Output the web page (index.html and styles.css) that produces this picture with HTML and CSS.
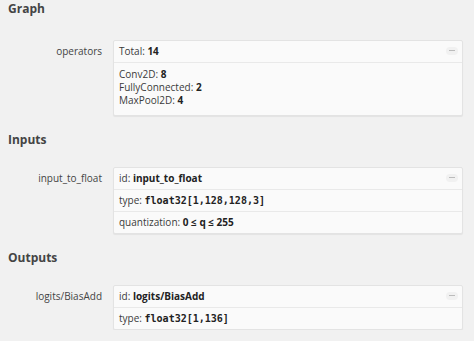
FILE: index.html
```html
<!DOCTYPE html>
<html>

<head>
    <title>Model Properties</title>
    <link rel="stylesheet" href="styles.css">
</head>

<body>
    <div class="sidebar">
        <div class="section-title first">Graph</div>
        <div class="item">
            <div class="item-name">operators</div>
            <div class="item-value">
                <div class="value-line">
                    <span class="expander"></span>
                    Total: <b>14</b>
                </div>
                <div class="value-line border list">
                    <div>Conv2D: <b>8</b></div>
                    <div>FullyConnected: <b>2</b></div>
                    <div>MaxPool2D: <b>4</b></div>
                </div>
            </div>
        </div>

        <div class="section-title">Inputs</div>
        <div class="item">
            <div class="item-name">input_to_float</div>
            <div class="item-value">
                <div class="value-line">
                    <span class="expander"></span>
                    id: <b>input_to_float</b>
                </div>
                <div class="value-line border">type: <code>float32[1,128,128,3]</code></div>
                <div class="value-line border">quantization: <b>0 ≤ q ≤ 255</b></div>
            </div>
        </div>

        <div class="section-title">Outputs</div>
        <div class="item">
            <div class="item-name">logits/BiasAdd</div>
            <div class="item-value">
                <div class="value-line">
                    <span class="expander"></span>
                    id: <b>logits/BiasAdd</b>
                </div>
                <div class="value-line border">type: <code>float32[1,136]</code></div>
            </div>
        </div>
    </div>
</body>

</html>
```

FILE: styles.css
```css
body {
    margin: 0;
    background-color: #f1f1f1;
    font-family: "Open Sans", sans-serif;
    color: #3a3a3a;
}

.sidebar {
    padding: 0 11px 0 8px;
}

.section-title {
    font-size: 12px;
    font-weight: bold;
    color: #444;
    line-height: 18px;
    margin-top: 15px;
    margin-bottom: 18px;
}

.section-title.first {
    margin-top: 0;
    margin-bottom: 22px;
}

.item {
    display: flex;
    align-items: flex-start;
}

.item-name {
    width: 94px;
    flex: none;
    text-align: right;
    font-size: 10px;
    line-height: 14px;
    color: #444;
    padding-top: 4px;
    padding-right: 11px;
}

.item-value {
    flex: 1;
    background-color: #fafafa;
    border: 1px solid #e3e3e3;
    border-radius: 2px;
    box-shadow: 0 1px 1px rgba(0, 0, 0, 0.06);
    font-size: 10px;
}

.value-line {
    padding: 4px 4px 4px 5px;
    line-height: 13px;
    min-height: 13px;
}

.value-line.border {
    border-top: 1px solid #e9e9e9;
}

.value-line.list {
    padding: 5px 5px 8px 5px;
}

.value-line b {
    color: #222;
}

.value-line code {
    font-family: "DejaVu Sans Mono", monospace;
    font-size: 10px;
    font-weight: bold;
    color: #222;
}

.expander {
    float: right;
    position: relative;
    width: 12px;
    height: 8px;
    margin-top: 2px;
    border-radius: 4px;
    background-color: #f1f1f1;
}

.expander::after {
    content: "";
    position: absolute;
    left: 3px;
    top: 3px;
    width: 6px;
    height: 1px;
    background-color: #bbb;
}
```
